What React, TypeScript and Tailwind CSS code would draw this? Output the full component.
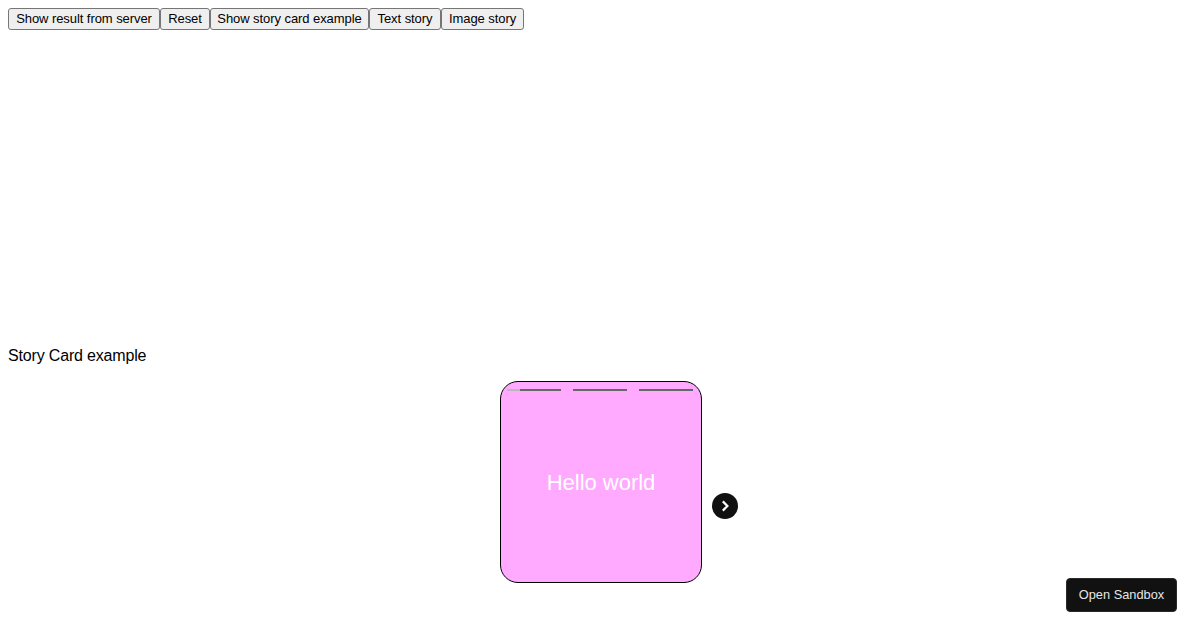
import React from "react";

const buttons = [
  { label: "Show result from server", width: "w-[152px]" },
  { label: "Reset", width: "w-[50px]" },
  { label: "Show story card example", width: "w-[159px]" },
  { label: "Text story", width: "w-[72px]" },
  { label: "Image story", width: "w-[83px]" },
];

function Arrow() {
  return (
    <div className="absolute left-[212px] top-[112px] flex h-[26px] w-[26px] items-center justify-center rounded-full bg-[#111111]">
      <svg width="12" height="12" viewBox="0 0 12 12" fill="none">
        <path d="M3.8 1.4L8.4 6L3.8 10.6" stroke="white" strokeWidth="2.2" />
      </svg>
    </div>
  );
}

function StoryCard() {
  return (
    <div className="relative ml-[2px] h-[202px] w-[202px]">
      <div className="relative flex h-full w-full items-center justify-center rounded-[18px] border border-black bg-[#ffaaff]">
        <div className="absolute left-[6px] right-[8px] top-[7px] flex gap-3">
          <div className="h-[2px] flex-1 bg-[#666666]">
            <div className="h-full w-[13px] bg-[#b9b9b9]" />
          </div>
          <div className="h-[2px] flex-1 bg-[#666666]" />
          <div className="h-[2px] flex-1 bg-[#666666]" />
        </div>
        <span className="text-[22px] tracking-[-0.03px] text-white">Hello world</span>
      </div>
      <Arrow />
    </div>
  );
}

export default function App() {
  return (
    <div className="relative h-[630px] w-[1200px] overflow-hidden bg-white font-['Liberation_Sans',Arial,sans-serif] text-black">
      <div className="flex px-2 pt-2">
        {buttons.map((item) => (
          <button
            key={item.label}
            className={`${item.width} h-[22px] rounded-[3px] border border-[#767676] bg-[#efefef] pb-px text-[13px] leading-[15px] tracking-[-0.07px] whitespace-nowrap`}
          >
            {item.label}
          </button>
        ))}
      </div>
      <div className="mt-[317px] px-2 text-base leading-[18px] tracking-[-0.17px]">Story Card example</div>
      <div className="mt-4 flex justify-center">
        <StoryCard />
      </div>
      <button className="absolute left-[1066px] top-[578px] flex h-[34px] w-[111px] items-center justify-center rounded-[4px] border border-[#2a2a2a] bg-[#111111] bg-[radial-gradient(#2c2c2c_0.6px,transparent_0.6px)] bg-[length:4px_4px] text-[12.8px] text-[#e6e6e6]">
        Open Sandbox
      </button>
    </div>
  );
}
